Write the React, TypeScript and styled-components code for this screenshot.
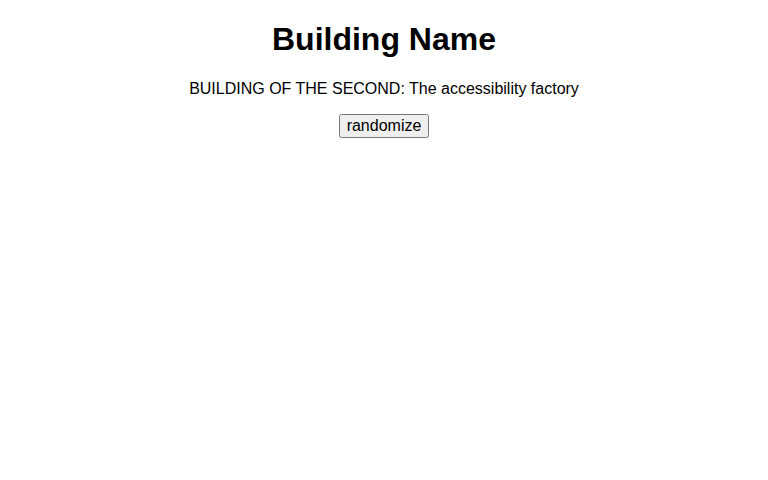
import React, { useState } from "react";
import styled, { createGlobalStyle } from "styled-components";

const GlobalStyle = createGlobalStyle`
  body {
    margin: 0;
    font-family: "Liberation Sans", Arial, sans-serif;
    background: #ffffff;
    color: #000000;
  }
`;

const Page = styled.div`
  text-align: center;
`;

const Title = styled.h1`
  font-size: 32px;
  font-weight: bold;
  margin: 21.44px 0;
`;

const Subtitle = styled.p`
  font-size: 16px;
  margin: 16px 0;
`;

const RandomButton = styled.button`
  font-family: "Liberation Sans", Arial, sans-serif;
  font-size: 16px;
`;

const names = [
  "BUILDING OF THE SECOND: The accessibility factory",
  "TOWER OF THE FIRST: The usability lab",
  "HALL OF THE THIRD: The design workshop",
];

export default function App() {
  const [index, setIndex] = useState(0);
  return (
    <Page>
      <GlobalStyle />
      <Title>Building Name</Title>
      <Subtitle>{names[index]}</Subtitle>
      <RandomButton onClick={() => setIndex((index + 1) % names.length)}>
        randomize
      </RandomButton>
    </Page>
  );
}
